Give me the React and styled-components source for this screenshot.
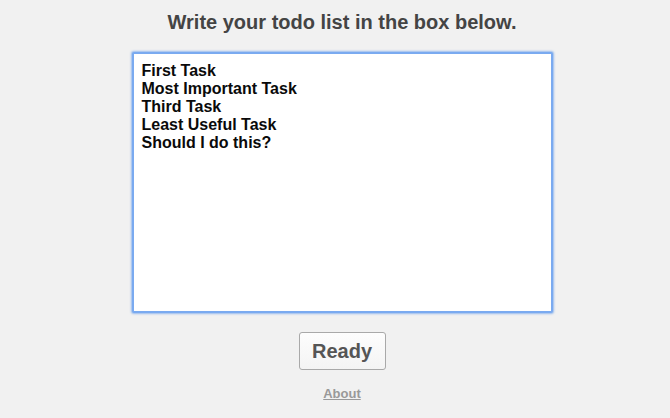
import React, { useState } from 'react';
import styled, { createGlobalStyle } from 'styled-components';

const GlobalStyle = createGlobalStyle`
  html, body {
    margin: 0;
    padding: 0;
    background: #f1f1f1;
  }
`;

const Page = styled.div`
  display: flex;
  flex-direction: column;
  align-items: center;
  width: 670px;
  height: 418px;
  padding: 11px 0 0 14px;
  box-sizing: border-box;
  font-family: 'Liberation Sans', Arial, sans-serif;
  background: #f1f1f1;
`;

const Title = styled.h1`
  margin: 0;
  font-size: 20px;
  line-height: 22px;
  font-weight: 700;
  color: #444;
`;

const TodoBox = styled.textarea`
  margin-top: 19px;
  width: 421px;
  height: 261px;
  box-sizing: border-box;
  padding: 8px 8px;
  border: 2px solid #7aaaf0;
  border-radius: 2px;
  box-shadow: 0 0 2px 1px rgba(91, 150, 235, 0.6);
  outline: none;
  resize: none;
  background: #fff;
  font-family: 'Liberation Sans', Arial, sans-serif;
  font-size: 16px;
  line-height: 18px;
  font-weight: 700;
  color: #0a0a0a;
`;

const ReadyButton = styled.button`
  margin-top: 19px;
  width: 87px;
  height: 38px;
  border: 1px solid #a9a9a9;
  border-radius: 3px;
  background: linear-gradient(#fdfdfd, #f4f4f4);
  font-family: 'Liberation Sans', Arial, sans-serif;
  font-size: 20px;
  font-weight: 700;
  color: #555;
  cursor: pointer;
`;

const AboutLink = styled.a`
  margin-top: 16px;
  font-size: 13px;
  font-weight: 700;
  color: #999;
  text-decoration: underline;
`;

const initial = `First Task
Most Important Task
Third Task
Least Useful Task
Should I do this?`;

const App = () => {
  const [todos, setTodos] = useState(initial);

  return (
    <Page>
      <GlobalStyle />
      <Title>Write your todo list in the box below.</Title>
      <TodoBox value={todos} onChange={e => setTodos(e.target.value)} />
      <ReadyButton>Ready</ReadyButton>
      <AboutLink href="#about">About</AboutLink>
    </Page>
  );
};

export default App;
